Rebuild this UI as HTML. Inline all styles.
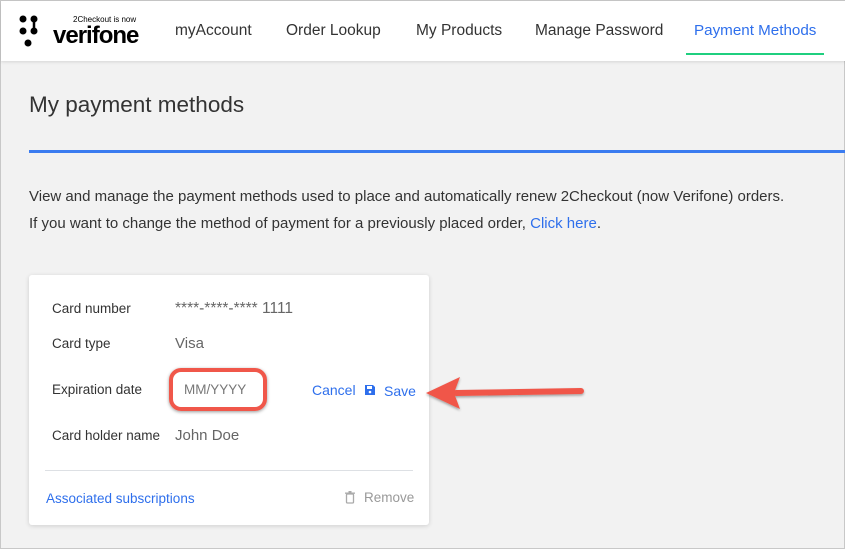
<!DOCTYPE html>
<html><head><meta charset="utf-8"><style>
*{margin:0;padding:0;box-sizing:border-box}
body{width:845px;height:549px;overflow:hidden;background:#f2f2f2;font-family:"Liberation Sans",sans-serif;position:relative;border:1px solid #c8c8c8}
.a{position:absolute;white-space:nowrap}
.hdr{position:absolute;left:0;top:0;width:845px;height:60px;background:#fff;box-shadow:0 1px 3px rgba(0,0,0,.12)}
.nav{font-size:15.5px;color:#333;top:21px}
.blue{color:#2e6fec}
.card{position:absolute;left:28px;top:274px;width:400px;height:250px;background:#fff;border-radius:3px;box-shadow:0 1px 5px rgba(0,0,0,.15)}
.lbl{font-size:13.5px;color:#333}
.val{font-size:15px;color:#666}
</style></head><body>
<div class="hdr">
<svg class="a" style="left:18px;top:14px" width="30" height="32" viewBox="0 0 30 32"><circle cx="4" cy="4" r="3.5" fill="#000"/><circle cx="15" cy="4" r="3.5" fill="#000"/><circle cx="4" cy="16" r="3.5" fill="#000"/><circle cx="15" cy="16" r="3.5" fill="#000"/><circle cx="9" cy="28" r="3.5" fill="#000"/><line x1="15" y1="4" x2="15" y2="16" stroke="#000" stroke-width="2.5"/></svg>
<div class="a" style="left:72px;top:14px;font-size:8px;color:#000">2Checkout is now</div>
<div class="a" style="left:52px;top:21px;font-size:24px;font-weight:bold;color:#000;letter-spacing:-1px">verifone</div>
<div class="a nav" style="left:174px">myAccount</div>
<div class="a nav" style="left:285px">Order Lookup</div>
<div class="a nav" style="left:415px">My Products</div>
<div class="a nav" style="left:534px">Manage Password</div>
<div class="a nav blue" style="left:693px;font-size:15.2px">Payment Methods</div>
<div class="a" style="left:685px;top:52px;width:138px;height:2px;background:#1fcf7f"></div>
</div>
<div class="a" style="left:28px;top:91px;font-size:22.5px;color:#333">My payment methods</div>
<div class="a" style="left:28px;top:149px;width:817px;height:3px;background:#3b7cf0"></div>
<div class="a" style="left:28px;top:187px;font-size:15px;color:#333">View and manage the payment methods used to place and automatically renew 2Checkout (now Verifone) orders.</div>
<div class="a" style="left:28px;top:214px;font-size:15px;color:#333">If you want to change the method of payment for a previously placed order, <span class="blue">Click here</span>.</div>
<div class="card">
<div class="a lbl" style="left:23px;top:26px">Card number</div>
<div class="a val" style="left:146px;top:25px;font-size:15.5px">****-****-**** 1111</div>
<div class="a lbl" style="left:23px;top:61px">Card type</div>
<div class="a val" style="left:146px;top:60px">Visa</div>
<div class="a lbl" style="left:23px;top:107px">Expiration date</div>
<div class="a" style="left:140px;top:93px;width:98px;height:43px;border:4px solid #f0574a;border-radius:12px;box-shadow:0 1px 3px rgba(0,0,0,.4)"></div>
<div class="a" style="left:155px;top:107px;font-size:13.5px;color:#777">MM/YYYY</div>
<div class="a blue" style="left:283px;top:107px;font-size:14px">Cancel</div>
<svg class="a" style="left:335px;top:109px" width="12" height="12" viewBox="0 0 12 12"><path d="M1 1h8l2 2v8H1z" fill="#2e6fec"/><rect x="3" y="2" width="5" height="3" fill="#fff"/><circle cx="6" cy="8" r="1.3" fill="#fff"/></svg>
<div class="a blue" style="left:355px;top:108px;font-size:14px">Save</div>
<div class="a lbl" style="left:23px;top:153px">Card holder name</div>
<div class="a val" style="left:146px;top:152px">John Doe</div>
<div class="a" style="left:16px;top:195px;width:368px;height:1px;background:#dde0e4"></div>
<div class="a blue" style="left:17px;top:216px;font-size:13.5px">Associated subscriptions</div>
<svg class="a" style="left:316px;top:216px" width="10" height="13" viewBox="0 0 10 13"><rect x="1.5" y="3" width="7" height="9" rx="1" fill="none" stroke="#aaa" stroke-width="1.3"/><rect x="0" y="1.5" width="10" height="1.3" fill="#aaa"/><rect x="3.5" y="0" width="3" height="1.5" fill="#aaa"/></svg>
<div class="a" style="left:335px;top:215px;font-size:13.5px;color:#999">Remove</div>
</div>
<svg class="a" style="left:415px;top:370px" width="180" height="45" viewBox="0 0 180 45"><defs><filter id="s"><feDropShadow dx="0" dy="1.5" stdDeviation="1.2" flood-opacity=".35"/></filter></defs><g filter="url(#s)"><line x1="40" y1="22" x2="165" y2="20" stroke="#f0574a" stroke-width="6" stroke-linecap="round"/><path d="M10 22 L44 6 L38 22 L44 38 Z" fill="#f0574a"/></g></svg>
</body></html>
